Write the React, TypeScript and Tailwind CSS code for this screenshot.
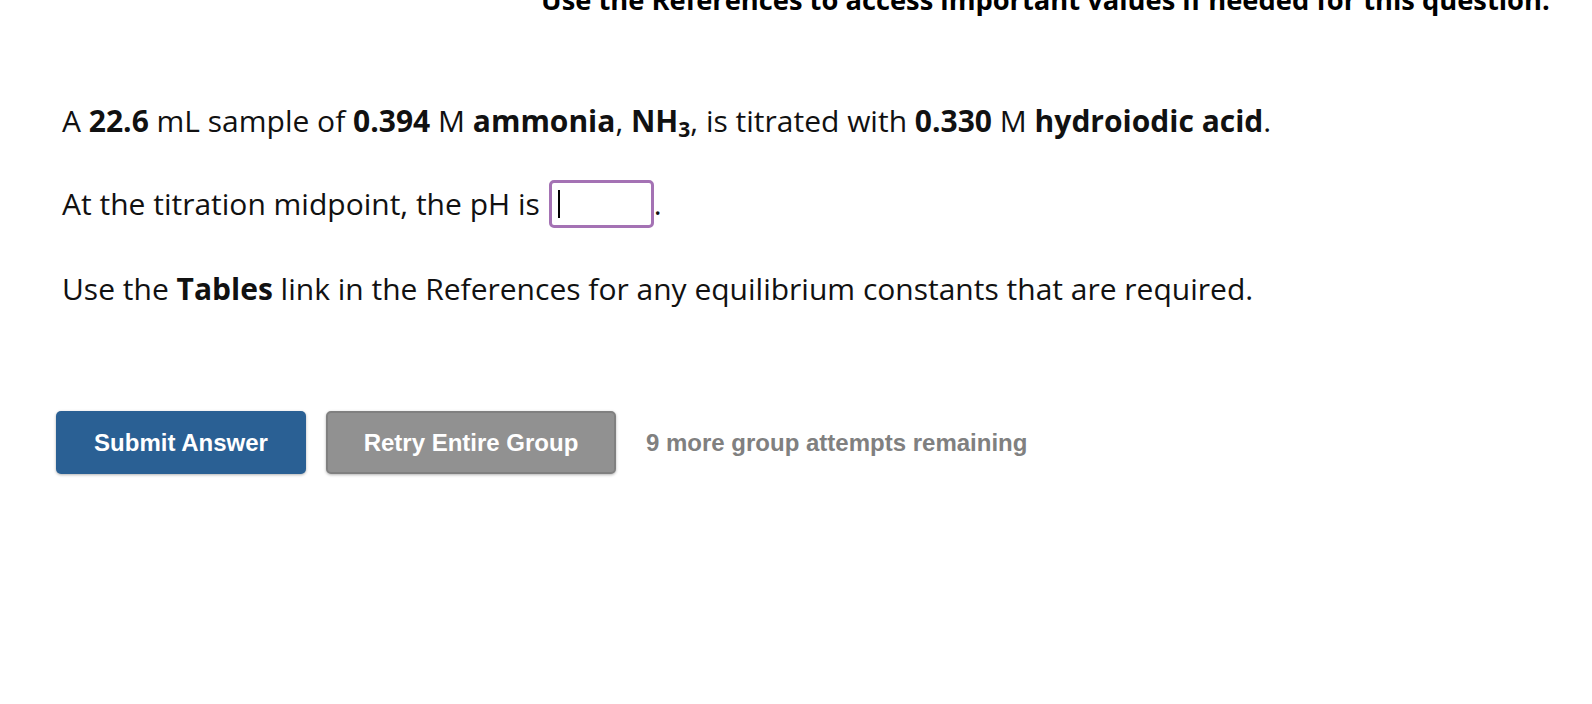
export default function App() {
  return (
    <div className="w-[1592px] h-[704px] bg-white overflow-hidden relative" style={{ fontFamily: '"Open Sans", sans-serif' }}>
      <div className="absolute left-[541px] top-[-20px] text-[27.3px] font-bold text-black whitespace-nowrap">
        Use the References to access important values if needed for this question.
      </div>
      <div className="pt-[100px] pl-[62px] text-[30px] text-[#111] leading-[42px]">
        <p>
          A <b>22.6</b> mL sample of <b>0.394</b> M <b>ammonia</b>, <b>NH<sub className="text-[21px]">3</sub></b>, is titrated with <b>0.330</b> M <b>hydroiodic acid</b>.
        </p>
        <div className="mt-[38px] flex items-center">
          <span>At the titration midpoint, the pH is</span>
          <span className="ml-[9px] w-[105px] h-[48px] border-[3px] border-[#a472b4] rounded-[5px] flex items-center pl-[6px]">
            <span className="w-[2px] h-[28px] bg-black" />
          </span>
          <span>.</span>
        </div>
        <p className="mt-[40px]">
          Use the <b>Tables</b> link in the References for any equilibrium constants that are required.
        </p>
      </div>
      <div className="mt-[101px] ml-[56px] flex items-center" style={{ fontFamily: '"Liberation Sans", Arial, sans-serif' }}>
        <button className="w-[250px] h-[63px] rounded-[5px] bg-[#2a6094] text-white text-[24px] font-bold shadow-[0_1px_3px_rgba(0,0,0,0.3)]">
          Submit Answer
        </button>
        <button className="ml-[20px] w-[290px] h-[63px] rounded-[5px] bg-[#919191] border-2 border-[#808080] text-white text-[24px] font-bold shadow-[0_1px_3px_rgba(0,0,0,0.3)]">
          Retry Entire Group
        </button>
        <span className="ml-[30px] text-[24px] font-bold text-[#808080]">9 more group attempts remaining</span>
      </div>
    </div>
  );
}
